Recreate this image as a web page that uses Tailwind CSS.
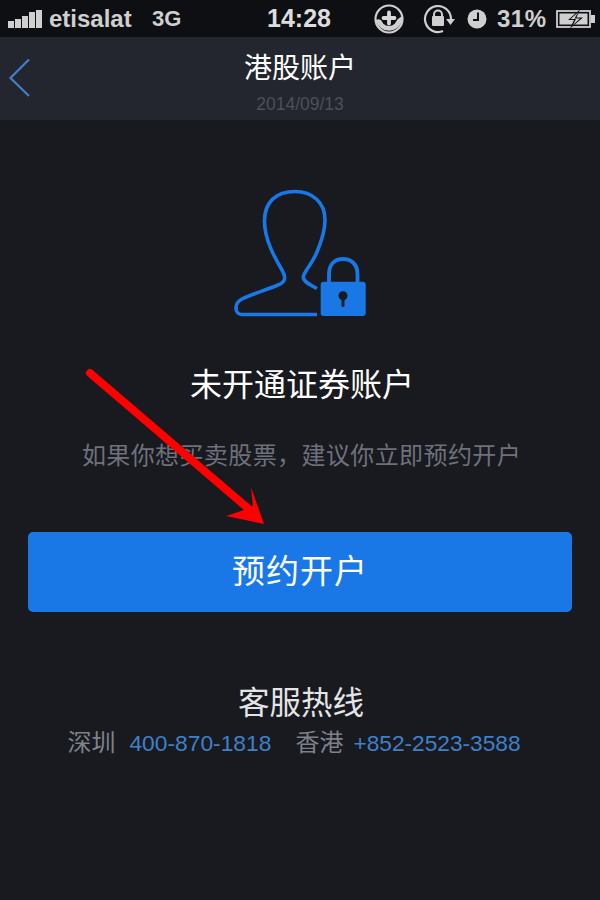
<!DOCTYPE html>
<html lang="zh">
<head>
    <meta charset="UTF-8">
    <meta name="viewport" content="width=device-width, initial-scale=1.0">
    <title>港股账户</title>
    <script src="https://cdn.jsdelivr.net/npm/@tailwindcss/browser@4"></script>
</head>
<body class="bg-[#181a20]">
    <div class="relative w-[600px] h-[900px] overflow-hidden bg-[#181a20] font-['Liberation_Sans','Noto_Sans_CJK_SC',sans-serif]">

        <!-- status bar -->
        <div class="flex items-center h-[37px] bg-[#0e0f12] text-[#cfcfcf] font-bold">
            <div class="flex items-end gap-[1px] ml-[8px] w-[35px] h-[18px]">
                <div class="w-[6px] h-[7px] bg-[#cfcfcf]"></div>
                <div class="w-[6px] h-[9px] bg-[#cfcfcf]"></div>
                <div class="w-[6px] h-[12px] bg-[#cfcfcf]"></div>
                <div class="w-[6px] h-[16px] bg-[#cfcfcf]"></div>
                <div class="w-[6px] h-[18px] bg-[#cfcfcf]"></div>
            </div>
            <span class="ml-[6px] w-[103px] text-[24px]">etisalat</span>
            <span class="w-[115px] text-[22px]">3G</span>
            <span class="w-[107px] text-[25px] text-[#dddddd]">14:28</span>
            <svg class="w-[30px] h-[30px]" viewBox="0 0 30 30" fill="none">
                <circle cx="15" cy="15" r="13.500" stroke="#cfcfcf" stroke-width="2.200"/>
                <path d="M2 16C7 13 9 20 15 20C21 20 23 15 28 12L28 17A13.500 13.500 0 0 1 2 17Z" fill="#cfcfcf"/>
                <circle cx="15" cy="14" r="8" fill="#0e0f12"/>
                <path d="M15 8.500v11M9.500 14h11" stroke="#d8d8d8" stroke-width="3.800" stroke-linecap="round"/>
            </svg>
            <svg class="ml-[19px] w-[32px] h-[30px]" viewBox="0 0 32 30" fill="none">
                <path d="M28 15A13 13 0 1 0 20 27" stroke="#cfcfcf" stroke-width="2.200"/>
                <path d="M23 15h9l-4.500 6Z" fill="#cfcfcf"/>
                <path d="M11 12V10.500a4 4 0 0 1 8 0V12" stroke="#cfcfcf" stroke-width="2"/>
                <rect x="9" y="12" width="12" height="10" rx="1" fill="#cfcfcf"/>
            </svg>
            <svg class="ml-[12px] w-[20px] h-[20px]" viewBox="0 0 20 20" fill="none">
                <circle cx="10" cy="10" r="9.500" fill="#cfcfcf"/>
                <path d="M11 3.500V11H6" stroke="#0e0f12" stroke-width="2"/>
            </svg>
            <span class="ml-[10px] w-[59px] text-[24px] tracking-[0.500px]">31%</span>
            <svg class="w-[40px] h-[20px]" viewBox="0 0 40 20" fill="none">
                <rect x="1" y="2" width="33" height="16" stroke="#cfcfcf" stroke-width="1.800"/>
                <rect x="3.500" y="4.500" width="28" height="11" fill="#cfcfcf"/>
                <rect x="35" y="6" width="4" height="8" fill="#cfcfcf"/>
                <path d="M24 0.500 12 11h6l-4 8.500L27 8.500h-6.500Z" fill="#0e0f12"/>
                <path d="M22 3.500 14.500 10h5.500l-3 6 7-6.500h-5.500Z" fill="#cfcfcf"/>
            </svg>
        </div>

        <!-- nav bar -->
        <div class="relative flex flex-col items-center h-[83px] bg-[#23262f]">
            <svg class="absolute left-[8px] top-[21px] w-[24px] h-[40px]" viewBox="0 0 24 40" fill="none">
                <path d="M21 1.500 2.500 20 21 38" stroke="#3f80c8" stroke-width="2.200"/>
            </svg>
            <div class="mt-[14px] h-[35px] leading-[35px] text-[28px] text-white">港股账户</div>
            <div class="mt-[8px] leading-[20px] text-[17.500px] text-[#4d505a]">2014/09/13</div>
        </div>

        <!-- main content -->
        <div class="flex flex-col items-center">
            <svg class="mt-[60px] w-[160px] h-[145px]" viewBox="0 0 160 145" fill="none">
                <path d="M97 108.500C90 105 82 101 83.500 96C84.500 91 92 84 97 72C102 60 105 50 105 40C105 22 92 11.500 75 11.500C56 11.500 44.500 22 44.500 41C44.500 60 55 78 62 90C66 97 66 102 58 105C46 110 32 114 22 119C14 123 14 134.500 22 134.500H97" stroke="#1a78e6" stroke-width="3.600"/>
                <path d="M109 103V94C109 84 115 79 123 79C131 79 137.500 84 137.500 94V103" stroke="#1a78e6" stroke-width="3.800"/>
                <rect x="100.700" y="101.700" width="45" height="34.300" rx="3" fill="#1a78e6"/>
                <circle cx="123" cy="115.700" r="4.500" fill="#181a20"/>
                <rect x="121.500" y="116" width="3" height="11" rx="1.500" fill="#181a20"/>
            </svg>
            <div class="mt-[38px] ml-[4px] leading-[44px] text-[32px] text-white">未开通证券账户</div>
            <div class="mt-[31px] ml-[3px] leading-[36px] text-[24px] tracking-[0.400px] text-[#6e717b]">如果你想买卖股票，建议你立即预约开户</div>
            <button class="mt-[58px] w-[544px] h-[80px] rounded-[5px] bg-[#1a78e6] text-[33px] tracking-[1px] text-white">预约开户</button>
            <div class="mt-[68px] ml-[2px] leading-[46px] text-[31.500px] text-[#e4e4e6]">客服热线</div>
            <div class="flex items-center mr-[12px] leading-[34px] text-[#7e8189]">
                <span class="text-[24px]">深圳</span>
                <span class="ml-[14px] text-[22.800px] text-[#3f80c8]">400-870-1818</span>
                <span class="ml-[24px] text-[24px]">香港</span>
                <span class="ml-[10px] text-[22.700px] text-[#3f80c8]">+852-2523-3588</span>
            </div>
        </div>

        <!-- red annotation arrow -->
        <svg class="absolute left-0 top-0 w-[600px] h-[900px] pointer-events-none" viewBox="0 0 600 900" fill="none">
            <path d="M90 373 250 510" stroke="#ff0000" stroke-width="8" stroke-linecap="round"/>
            <path d="M264 524 226 516 253 507 251 487Z" fill="#ff0000"/>
        </svg>
    </div>
</body>
</html>
